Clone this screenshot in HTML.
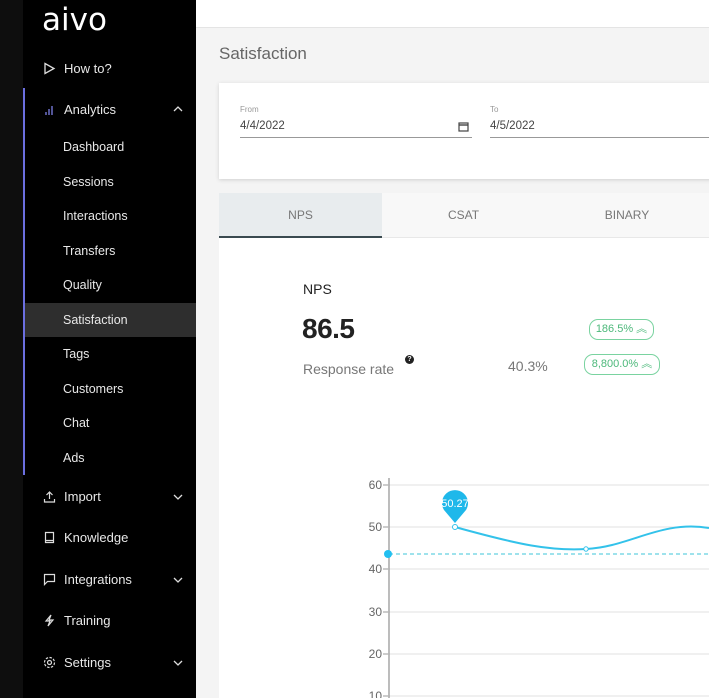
<!DOCTYPE html>
<html><head><meta charset="utf-8"><style>
*{margin:0;padding:0;box-sizing:border-box}
body{width:709px;height:698px;overflow:hidden;background:#f4f4f4;font-family:"Liberation Sans",sans-serif;position:relative}
.strip{position:absolute;left:0;top:0;width:23px;height:698px;background:#0e0e0e}
.side{position:absolute;left:23px;top:0;width:173px;height:698px;background:#000;color:#e8e8e8;font-size:13px}
.logo{position:absolute;left:19px;top:2px;font-size:31px;color:#fff;letter-spacing:0px;font-family:"DejaVu Sans",sans-serif;font-weight:normal}
.bar{position:absolute;left:0;top:88px;width:2px;height:387px;background:#6b6fe0}
.it{position:absolute;left:41px;font-size:13px}
.sub{position:absolute;left:40px;font-size:12.5px}
.ic{position:absolute;left:20px;width:13px;height:13px}
.chev{position:absolute;left:150px;width:10px;height:6px}
.sel{position:absolute;left:2px;top:303px;width:171px;height:34px;background:#2e2e2e}
.top{position:absolute;left:196px;top:0;right:0;height:28px;background:#fff;border-bottom:1px solid #e4e4e4}
h1{position:absolute;left:219px;top:44px;font-size:17px;color:#666;font-weight:normal}
.card{position:absolute;left:219px;top:83px;width:500px;height:96px;background:#fff;box-shadow:0 1px 4px rgba(0,0,0,.15)}
.lbl{position:absolute;font-size:8px;color:#999}
.val{position:absolute;font-size:11.5px;color:#444}
.ul{position:absolute;height:1px;background:#999}
.tabs{position:absolute;left:219px;top:193px;width:490px;height:45px;background:#f8f8f8;border-bottom:1px solid #e8e8e8}
.tab{position:absolute;top:0;height:45px;line-height:44px;text-align:center;font-size:12px;color:#777}
.body{position:absolute;left:219px;top:238px;width:490px;height:460px;background:#fff}
.pill{position:absolute;border:1px solid #7ad3a0;border-radius:9px;color:#4cb87a;font-size:11px;height:21px;line-height:19px;text-align:center}
</style></head><body>
<div class="strip"></div>
<div class="side">
<div class="logo">aivo</div>
<div class="bar"></div>
<div class="sel"></div>
<svg class="ic" style="top:62px" viewBox="0 0 13 13"><path d="M2 1.5L11 6.5 2 11.5Z" fill="none" stroke="#ddd" stroke-width="1.3"/></svg>
<div class="it" style="top:61px">How to?</div>
<svg class="ic" style="top:103px" viewBox="0 0 13 13"><path d="M3 12v-3M6 12V6M9 12V3" stroke="#7d80e6" stroke-width="1.3"/></svg>
<div class="it" style="top:102px">Analytics</div>
<svg class="chev" style="top:106px" viewBox="0 0 10 6"><path d="M1 5l4-4 4 4" fill="none" stroke="#ddd" stroke-width="1.3"/></svg>
<div class="sub" style="top:140px">Dashboard</div>
<div class="sub" style="top:175px">Sessions</div>
<div class="sub" style="top:209px">Interactions</div>
<div class="sub" style="top:244px">Transfers</div>
<div class="sub" style="top:278px">Quality</div>
<div class="sub" style="top:313px">Satisfaction</div>
<div class="sub" style="top:347px">Tags</div>
<div class="sub" style="top:382px">Customers</div>
<div class="sub" style="top:416px">Chat</div>
<div class="sub" style="top:451px">Ads</div>
<svg class="ic" style="top:490px" viewBox="0 0 13 13"><path d="M6.5 9V2M3.5 5l3-3 3 3M1.5 9v3h10V9" fill="none" stroke="#ddd" stroke-width="1.2"/></svg>
<div class="it" style="top:489px">Import</div>
<svg class="chev" style="top:494px" viewBox="0 0 10 6"><path d="M1 1l4 4 4-4" fill="none" stroke="#ddd" stroke-width="1.3"/></svg>
<svg class="ic" style="top:531px" viewBox="0 0 13 13"><path d="M2.5 1.5h8v10h-8zM2.5 9.5h8" fill="none" stroke="#ddd" stroke-width="1.2"/></svg>
<div class="it" style="top:530px">Knowledge</div>
<svg class="ic" style="top:573px" viewBox="0 0 13 13"><path d="M1.5 1.5h10v7h-7l-3 3z" fill="none" stroke="#ddd" stroke-width="1.2"/></svg>
<div class="it" style="top:572px">Integrations</div>
<svg class="chev" style="top:577px" viewBox="0 0 10 6"><path d="M1 1l4 4 4-4" fill="none" stroke="#ddd" stroke-width="1.3"/></svg>
<svg class="ic" style="top:614px" viewBox="0 0 13 13"><path d="M8 1L3 7h4l-2 5 5-6H6z" fill="none" stroke="#ddd" stroke-width="1.2"/></svg>
<div class="it" style="top:613px">Training</div>
<svg class="ic" style="top:656px" viewBox="0 0 13 13"><circle cx="6.5" cy="6.5" r="2" fill="none" stroke="#ddd" stroke-width="1.2"/><circle cx="6.5" cy="6.5" r="5" fill="none" stroke="#ddd" stroke-width="1.2" stroke-dasharray="2.5 1.4"/></svg>
<div class="it" style="top:655px">Settings</div>
<svg class="chev" style="top:660px" viewBox="0 0 10 6"><path d="M1 1l4 4 4-4" fill="none" stroke="#ddd" stroke-width="1.3"/></svg>
</div>
<div class="top"></div>
<h1>Satisfaction</h1>
<div class="card">
<div class="lbl" style="left:21px;top:22px">From</div>
<div class="val" style="left:21px;top:37px">4/4/2022</div>
<svg style="position:absolute;left:239px;top:39px" width="11" height="10" viewBox="0 0 11 10"><rect x="1" y="1" width="9" height="8" fill="none" stroke="#444" stroke-width="1.2"/><path d="M1 3h9" stroke="#444" stroke-width="1.4"/></svg>
<div class="ul" style="left:21px;top:54px;width:232px"></div>
<div class="lbl" style="left:271px;top:22px">To</div>
<div class="val" style="left:271px;top:37px">4/5/2022</div>
<div class="ul" style="left:271px;top:54px;width:230px"></div>
</div>
<div class="tabs">
<div class="tab" style="left:0;width:163px;background:#e8ecee;border-bottom:2px solid #3a4a50">NPS</div>
<div class="tab" style="left:163px;width:163px">CSAT</div>
<div class="tab" style="left:326px;width:164px">BINARY</div>
</div>
<div class="body"></div>
<div style="position:absolute;left:303px;top:281px;font-size:14px;color:#222">NPS</div>
<div style="position:absolute;left:302px;top:313px;font-size:28px;color:#222;font-weight:bold;letter-spacing:-0.5px">86.5</div>
<div style="position:absolute;left:303px;top:361px;font-size:14px;color:#777">Response rate</div>
<div style="position:absolute;left:405px;top:355px;width:9px;height:9px;border-radius:50%;background:#222;color:#fff;font-size:7px;line-height:9px;text-align:center;font-weight:bold">?</div>
<div style="position:absolute;left:508px;top:358px;font-size:14px;color:#777">40.3%</div>
<div class="pill" style="left:589px;top:319px;width:65px">186.5% ︽</div>
<div class="pill" style="left:584px;top:354px;width:76px">8,800.0% ︽</div>
<svg style="position:absolute;left:350px;top:470px" width="359" height="228" viewBox="350 470 359 228">
<g stroke="#e2e2e2" stroke-width="1"><path d="M388 485H709M388 527H709M388 569H709M388 612H709M388 654H709M388 696H709"/></g>
<path d="M389 478V698" stroke="#999" stroke-width="1.3"/>
<g stroke="#999"><path d="M383 485h5M383 527h5M383 569h5M383 612h5M383 654h5M383 696h5"/></g>
<g font-size="12" fill="#666" font-family="Liberation Sans" text-anchor="end"><text x="382" y="489">60</text><text x="382" y="531">50</text><text x="382" y="573">40</text><text x="382" y="616">30</text><text x="382" y="658">20</text><text x="382" y="700">10</text></g>
<path d="M389 554H709" stroke="#3cc4d8" stroke-dasharray="4 3"/>
<circle cx="388" cy="554" r="4" fill="#22bff0"/>
<path d="M455 527C520 545 550 551 586 549C630 547 660 520 709 528" fill="none" stroke="#33c2ea" stroke-width="2"/>
<circle cx="455" cy="527" r="2.5" fill="#fff" stroke="#33c2ea"/><circle cx="586" cy="549" r="2.2" fill="#fff" stroke="#33c2ea"/>
<path d="M455 523L444 510A13 13 0 1 1 466 510Z" fill="#1fb8ea"/>
<text x="455" y="507" font-size="11" fill="#fff" text-anchor="middle" font-family="Liberation Sans">50.27</text>
</svg>
</body></html>
